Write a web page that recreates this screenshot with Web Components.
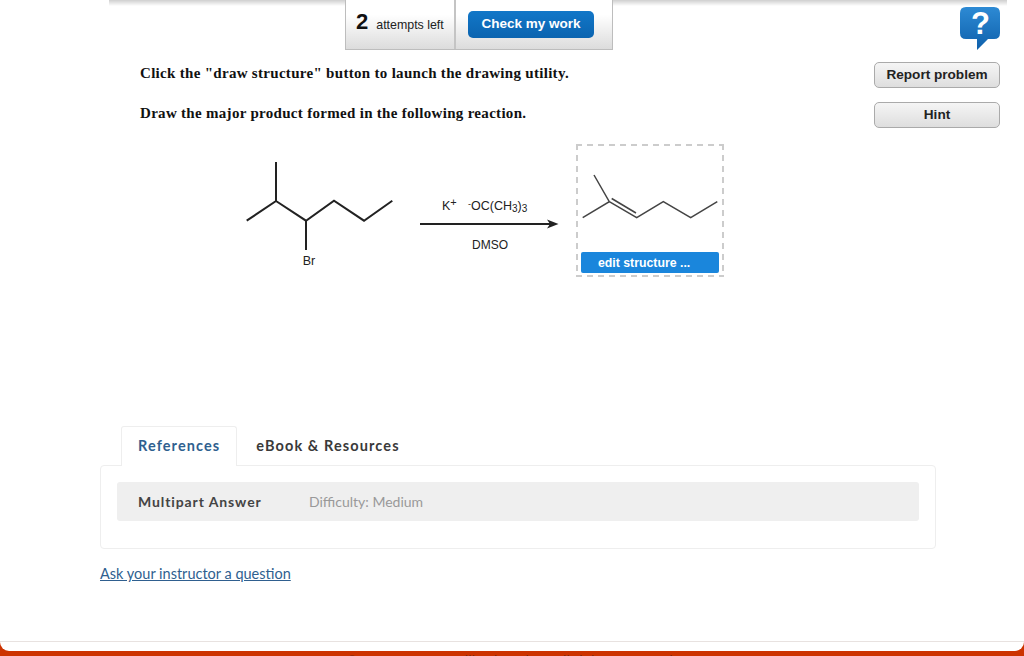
<!DOCTYPE html>
<html lang="en">
<head>
<meta charset="utf-8">
<title>Question</title>
<style>
  html, body { margin: 0; height: 100%; background: #fff; }
  body { width: 1024px; height: 656px; overflow: hidden; display: flex; flex-direction: column; font-family: "Liberation Sans", Arial, sans-serif; }
</style>
</head>
<body>
  <quiz-header attempts="2"></quiz-header>
  <question-area>
    <p>Click the "draw structure" button to launch the drawing utility.</p>
    <p>Draw the major product formed in the following reaction.</p>
    <reaction-figure slot="figure"></reaction-figure>
    <side-button slot="side">Report problem</side-button>
    <side-button slot="side">Hint</side-button>
  </question-area>
  <ref-tabs></ref-tabs>
  <site-footer></site-footer>

<script>
// top strip: attempts counter, submit button, help bubble
class QuizHeader extends HTMLElement {
  constructor() {
    super();
    this.attachShadow({ mode: "open" });
    this.shadowRoot.innerHTML = `
      <style>
        :host {
          display: flex;
          justify-content: space-between;
          height: 50px;
          margin: 0 17px 0 109px;
          padding: 0 7px 0 236px;
          background: linear-gradient(#cfcfcf, #fff) no-repeat 0 0 / 100% 6px;
          flex: none;
        }
        .panel {
          display: flex;
          width: 268px;
          height: 50px;
          box-sizing: border-box;
          border: 1px solid #bdbdbd;
          border-top: 0;
          background: linear-gradient(#fff 30%, #dcdcdc);
        }
        .attempts {
          width: 110px;
          box-sizing: border-box;
          border-right: 2px solid #c4c4c4;
          padding: 9px 0 0 10px;
          font-size: 12.400px;
          color: #222;
          display: flex;
          align-items: baseline;
          gap: 8px;
        }
        .attempts b { font-size: 22px; color: #111; }
        .check {
          margin: 11px 0 0 12px;
          width: 126px;
          height: 27px;
          border-radius: 5px;
          background: linear-gradient(#1277c8, #0b64b0);
          color: #fff;
          font: bold 13.500px/26px "Liberation Sans", Arial, sans-serif;
          text-align: center;
        }
        svg { display: block; margin-top: 7px; }
      </style>
      <div class="panel">
        <div class="attempts"><b></b><span>attempts left</span></div>
        <div class="check">Check my work</div>
      </div>
      <svg width="40" height="43" viewBox="0 0 40 43">
        <defs>
          <linearGradient id="helpFill" x1="0" y1="0" x2="0" y2="1">
            <stop offset="0" stop-color="#2d8ad4"/>
            <stop offset="1" stop-color="#0e60ab"/>
          </linearGradient>
        </defs>
        <path d="M6 0H34Q40 0 40 6V26Q40 32 34 32H28L17 43V32H6Q0 32 0 26V6Q0 0 6 0Z" fill="url(#helpFill)"/>
        <text x="20.500" y="27" text-anchor="middle" font-family="Liberation Sans, Arial, sans-serif" font-weight="700" font-size="31" fill="#fff">?</text>
      </svg>`;
    this.shadowRoot.querySelector("b").textContent = this.getAttribute("attempts") || "0";
  }
}

class QuestionArea extends HTMLElement {
  constructor() {
    super();
    this.attachShadow({ mode: "open" });
    this.shadowRoot.innerHTML = `
      <style>
        :host {
          display: grid;
          grid-template-columns: 874px 126px;
          height: 376px;
          flex: none;
        }
        .text {
          padding: 11px 0 0 140px;
          font: bold 15px/24px "Liberation Serif", "Times New Roman", serif;
          color: #111;
        }
        ::slotted(p) { margin: 0 0 16px; letter-spacing: 0.3px; }
        .side { display: flex; flex-direction: column; gap: 14px; padding-top: 12px; }
      </style>
      <div class="text">
        <slot></slot>
        <slot name="figure"></slot>
      </div>
      <div class="side"><slot name="side"></slot></div>`;
  }
}

class SideButton extends HTMLElement {
  constructor() {
    super();
    this.attachShadow({ mode: "open" });
    this.shadowRoot.innerHTML = `
      <style>
        :host {
          display: block;
          height: 26px;
          box-sizing: border-box;
          border: 1px solid #aaa;
          border-radius: 5px;
          background: linear-gradient(#f5f5f5, #dedede);
          color: #222;
          font: bold 13.600px/23px "Liberation Sans", Arial, sans-serif;
          text-align: center;
        }
      </style>
      <slot></slot>`;
  }
}

// reaction scheme on the left, answer box on the right
class ReactionFigure extends HTMLElement {
  constructor() {
    super();
    this.attachShadow({ mode: "open" });
    this.shadowRoot.innerHTML = `
      <style>
        :host { display: flex; margin: 19px 0 0 105px; align-items: flex-start; font-weight: 400; }
        svg { display: block; flex: none; }
        text { font-family: "Liberation Sans", Arial, sans-serif; fill: #222; }
      </style>
      <svg width="331" height="134" viewBox="245 144 331 134">
        <g fill="none" stroke="#222" stroke-width="2">
          <path d="M276 162V201L246.700 220.700M276 201L306 220.700L334 200.700L364 220.700L392.300 200.700M306 220.700V250"/>
          <path d="M420 224H550"/>
        </g>
        <path d="M558.500 224L547 219.500L550 224L547 228.500Z" fill="#222"/>
        <text x="309" y="265" font-size="12.500" text-anchor="middle">Br</text>
        <text x="442" y="210" font-size="12.500">K<tspan dy="-4" font-size="11">+</tspan></text>
        <text x="468" y="210" font-size="12.500"><tspan dy="-3" font-size="9">-</tspan><tspan dy="3">OC(CH</tspan><tspan dy="2" font-size="10">3</tspan><tspan dy="-2">)</tspan><tspan dy="2" font-size="10">3</tspan></text>
        <text x="490" y="249" font-size="12" text-anchor="middle">DMSO</text>
      </svg>
      <structure-box></structure-box>`;
  }
}

class StructureBox extends HTMLElement {
  constructor() {
    super();
    this.attachShadow({ mode: "open" });
    this.shadowRoot.innerHTML = `
      <style>
        :host {
          --dash: repeating-linear-gradient(90deg, #ccc 0 6px, transparent 6px 11px);
          --dash-v: repeating-linear-gradient(#ccc 0 6px, transparent 6px 11px);
          display: block;
          width: 148px;
          height: 133px;
          box-sizing: border-box;
          padding: 2px 5px;
          flex: none;
          background:
            var(--dash) 0 0 / 100% 2px no-repeat,
            var(--dash) 0 100% / 100% 2px no-repeat,
            var(--dash-v) 0 0 / 2px 100% no-repeat,
            var(--dash-v) 100% 0 / 2px 100% no-repeat;
        }
        svg { display: block; margin: 0 -3px; }
        .edit {
          height: 21px;
          padding-left: 17px;
          border-radius: 2px;
          background: #1a86dc;
          color: #fff;
          font: bold 12.300px/22px "Liberation Sans", Arial, sans-serif;
        }
      </style>
      <svg width="144" height="106" viewBox="578 146 144 106">
        <g fill="none" stroke="#444" stroke-width="1.500">
          <path d="M594 175L609.300 201.700L582.700 217.700M609.300 201.700L636.700 217.700L663.300 201.700L690.700 217.700L717.300 201.700"/>
          <path d="M611.700 198.500L636 213"/>
        </g>
      </svg>
      <div class="edit">edit structure ...</div>`;
  }
}

class RefTabs extends HTMLElement {
  constructor() {
    super();
    this.attachShadow({ mode: "open" });
    this.shadowRoot.innerHTML = `
      <style>
        :host {
          display: block;
          margin-left: 100px;
          width: 836px;
          flex: none;
          font-family: Lato, "Open Sans", sans-serif;
        }
        .tabs { display: flex; padding-left: 21px; height: 39px; position: relative; z-index: 1; }
        .tab {
          box-sizing: border-box;
          height: 40px;
          padding: 0 18px 0 19px;
          font-size: 14.500px;
          font-weight: 700;
          line-height: 40px;
          letter-spacing: 1.100px;
          color: #3a3a3a;
        }
        .tab.on {
          color: #2f5f8f;
          background: #fff;
          border: 1px solid #eee;
          border-bottom: 0;
          border-radius: 3px 3px 0 0;
          padding: 0 16px;
          line-height: 38px;
        }
        .panel {
          height: 84px;
          box-sizing: border-box;
          border: 1px solid #eee;
          border-radius: 4px;
          padding: 16px;
        }
        .bar {
          display: flex;
          height: 39px;
          box-sizing: border-box;
          padding: 0 0 1px 21px;
          align-items: center;
          background: #efefef;
          border-radius: 3px;
        }
        .bar b { width: 171px; font-size: 14px; letter-spacing: 0.9px; color: #444; }
        .bar span { font-size: 14px; color: #999; }
        a {
          display: inline-block;
          margin-top: 16px;
          font-size: 14.500px;
          color: #2f5f8f;
          text-decoration: underline;
        }
      </style>
      <div class="tabs">
        <div class="tab on">References</div>
        <div class="tab">eBook &amp; Resources</div>
      </div>
      <div class="panel">
        <div class="bar"><b>Multipart Answer</b><span>Difficulty: Medium</span></div>
      </div>
      <a href="#">Ask your instructor a question</a>`;
  }
}

// only the top of the copyright line is inside the window
class SiteFooter extends HTMLElement {
  constructor() {
    super();
    this.attachShadow({ mode: "open" });
    this.shadowRoot.innerHTML = `
      <style>
        :host {
          display: block;
          margin-top: auto;
          height: 15px;
          flex: none;
          box-sizing: border-box;
          border-top: 1px solid #e8e2e0;
          background: #cc3300;
          overflow: hidden;
        }
        .sheet { height: 9px; background: #fff; border-radius: 0 0 9px 9px; }
        .copy {
          height: 20px;
          font: 14px/20px "Liberation Sans", Arial, sans-serif;
          letter-spacing: 0.4px;
          color: #7a2a10;
          text-align: center;
        }
      </style>
      <div class="sheet"></div>
      <div class="copy">©2018 McGraw-Hill Education. All rights reserved.</div>`;
  }
}

customElements.define("quiz-header", QuizHeader);
customElements.define("question-area", QuestionArea);
customElements.define("side-button", SideButton);
customElements.define("structure-box", StructureBox);
customElements.define("reaction-figure", ReactionFigure);
customElements.define("ref-tabs", RefTabs);
customElements.define("site-footer", SiteFooter);
</script>
</body>
</html>
